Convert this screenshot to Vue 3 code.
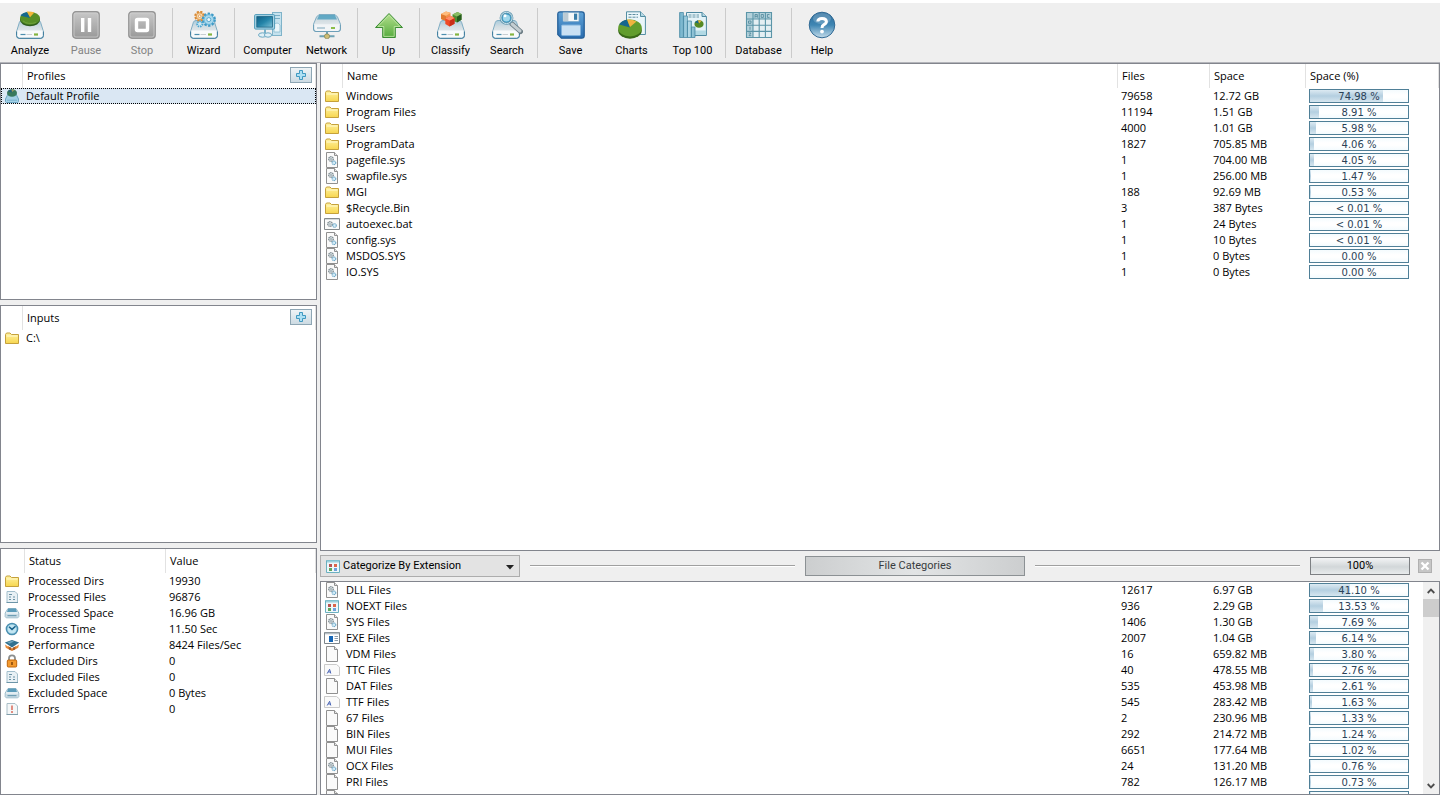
<script setup>
import { ref } from 'vue'

const groups = [
  [
    { label: 'Analyze', icon: 'analyze', size: 'sm' },
    { label: 'Pause', icon: 'pause', size: 'sm', off: true },
    { label: 'Stop', icon: 'stop', size: 'sm', off: true }
  ],
  [{ label: 'Wizard', icon: 'wizard', size: 'md' }],
  [
    { label: 'Computer', icon: 'computer', size: 'lg' },
    { label: 'Network', icon: 'network', size: 'md' }
  ],
  [{ label: 'Up', icon: 'up', size: 'md' }],
  [
    { label: 'Classify', icon: 'classify', size: 'md' },
    { label: 'Search', icon: 'search', size: 'sm' }
  ],
  [
    { label: 'Save', icon: 'save', size: 'lg' },
    { label: 'Charts', icon: 'charts', size: 'lg' },
    { label: 'Top 100', icon: 'top', size: 'lg' }
  ],
  [{ label: 'Database', icon: 'database', size: 'lg' }],
  [{ label: 'Help', icon: 'help', size: 'sm' }]
]

const row = (icon, name, files, space, pct) => ({ icon, name, files, space, pct, fill: parseFloat(pct) || 0 })

const entries = [
  row('folder', 'Windows', '79658', '12.72 GB', '74.98 %'),
  row('folder', 'Program Files', '11194', '1.51 GB', '8.91 %'),
  row('folder', 'Users', '4000', '1.01 GB', '5.98 %'),
  row('folder', 'ProgramData', '1827', '705.85 MB', '4.06 %'),
  row('sys', 'pagefile.sys', '1', '704.00 MB', '4.05 %'),
  row('sys', 'swapfile.sys', '1', '256.00 MB', '1.47 %'),
  row('folder', 'MGI', '188', '92.69 MB', '0.53 %'),
  row('folder', '$Recycle.Bin', '3', '387 Bytes', '< 0.01 %'),
  row('bat', 'autoexec.bat', '1', '24 Bytes', '< 0.01 %'),
  row('sys', 'config.sys', '1', '10 Bytes', '< 0.01 %'),
  row('sys', 'MSDOS.SYS', '1', '0 Bytes', '0.00 %'),
  row('sys', 'IO.SYS', '1', '0 Bytes', '0.00 %')
]

const categories = [
  row('sys', 'DLL Files', '12617', '6.97 GB', '41.10 %'),
  row('cat', 'NOEXT Files', '936', '2.29 GB', '13.53 %'),
  row('sys', 'SYS Files', '1406', '1.30 GB', '7.69 %'),
  row('exe', 'EXE Files', '2007', '1.04 GB', '6.14 %'),
  row('page', 'VDM Files', '16', '659.82 MB', '3.80 %'),
  row('font', 'TTC Files', '40', '478.55 MB', '2.76 %'),
  row('page', 'DAT Files', '535', '453.98 MB', '2.61 %'),
  row('font', 'TTF Files', '545', '283.42 MB', '1.63 %'),
  row('page', '67 Files', '2', '230.96 MB', '1.33 %'),
  row('page', 'BIN Files', '292', '214.72 MB', '1.24 %'),
  row('page', 'MUI Files', '6651', '177.64 MB', '1.02 %'),
  row('sys', 'OCX Files', '24', '131.20 MB', '0.76 %'),
  row('page', 'PRI Files', '782', '126.17 MB', '0.73 %'),
  row('page', '73 Files', '2', '122.88 MB', '0.71 %')
]

const status = [
  ['folder', 'Processed Dirs', '19930'],
  ['doc', 'Processed Files', '96876'],
  ['disk', 'Processed Space', '16.96 GB'],
  ['clock', 'Process Time', '11.50 Sec'],
  ['perf', 'Performance', '8424 Files/Sec'],
  ['lock', 'Excluded Dirs', '0'],
  ['doc', 'Excluded Files', '0'],
  ['disk', 'Excluded Space', '0 Bytes'],
  ['err', 'Errors', '0']
]

const mode = ref('Categorize By Extension')
</script>

<template>
  <div class="app">
    <svg class="defs" aria-hidden="true">
      <defs>
        <linearGradient id="gDrive" x1="0" y1="0" x2="0" y2="1"><stop offset="0" stop-color="#a9cbdc" /><stop offset=".35" stop-color="#d3dde2" /><stop offset="1" stop-color="#f6f8f9" /></linearGradient>
        <linearGradient id="gGreen" x1="0" y1="0" x2="0" y2="1"><stop offset="0" stop-color="#b4e08e" /><stop offset="1" stop-color="#55ab3d" /></linearGradient>
        <linearGradient id="gGray" x1="0" y1="0" x2="0" y2="1"><stop offset="0" stop-color="#c8c8c8" /><stop offset="1" stop-color="#999" /></linearGradient>
        <linearGradient id="gBlue" x1="0" y1="0" x2="0" y2="1"><stop offset="0" stop-color="#2c6d9c" /><stop offset=".5" stop-color="#3f86b3" /><stop offset="1" stop-color="#c4dcea" /></linearGradient>
        <linearGradient id="gSave" x1="0" y1="0" x2="0" y2="1"><stop offset="0" stop-color="#5fa3d8" /><stop offset="1" stop-color="#2a6db0" /></linearGradient>
        <linearGradient id="gScreen" x1="0" y1="0" x2="1" y2="1"><stop offset="0" stop-color="#0f5f86" /><stop offset=".5" stop-color="#2585a9" /><stop offset="1" stop-color="#7cc0d6" /></linearGradient>
        <linearGradient id="gFolder" x1="0" y1="0" x2="0" y2="1"><stop offset="0" stop-color="#fff2a0" /><stop offset="1" stop-color="#f7d64f" /></linearGradient>
        <linearGradient id="gBars" x1="0" y1="0" x2="1" y2="0"><stop offset="0" stop-color="#6fb0ca" /><stop offset=".6" stop-color="#b2d9e7" /><stop offset="1" stop-color="#7db6cb" /></linearGradient>
      </defs>

      <symbol id="drive" viewBox="0 0 28 28">
        <path d="M6 9.5H22Q24 9.5 24.6 11.3L27.4 20.5V24.5Q27.4 27.3 24.8 27.3H3.2Q.6 27.3 .6 24.5V20.5L3.4 11.3Q4 9.5 6 9.5Z" fill="url(#gDrive)" stroke="#80adc3" />
        <path d="M1.3 19.6H26.7V24.3Q26.7 26.4 24.6 26.4H3.4Q1.3 26.4 1.3 24.3Z" fill="#f8fafb" />
        <path d="M.6 20.5V24.5Q.6 27.3 3.2 27.3H24.8Q27.4 27.3 27.4 24.5V20.5" fill="none" stroke="#3d7c9d" />
        <path d="M4.5 23.5H9.5" stroke="#4d8fae" stroke-width="1.2" />
        <path d="M10.5 23.5H16" stroke="#c7ced2" />
        <path d="M18 23.5H22" stroke="#84b440" stroke-width="2.2" />
      </symbol>
      <symbol id="analyze" viewBox="0 0 28 28">
        <use href="#drive" />
        <ellipse cx="14" cy="9" rx="10" ry="6.2" fill="#2f5d1c" />
        <ellipse cx="14" cy="7.3" rx="10" ry="6.4" fill="#578f27" />
        <path d="M14 7 4.6 4.8Q6.4 1.6 11.3 1Z" fill="#15688e" />
        <path d="M14 6.2 10.7.6Q15 .2 18.3 1.6Z" fill="#f2b63a" />
        <path d="M7 10Q12 14 20 11.5" stroke="#79aa43" fill="none" opacity=".7" />
      </symbol>
      <symbol id="pause" viewBox="0 0 28 28">
        <rect x=".8" y=".8" width="26.4" height="26.4" rx="3" fill="url(#gGray)" stroke="#969696" stroke-width="1.4" />
        <rect x="2" y="2" width="24" height="24" rx="2" fill="none" stroke="#d2d2d2" opacity=".7" />
        <path d="M9 7h3.4v14H9zM15.8 7h3.4v14h-3.4z" fill="#fff" />
      </symbol>
      <symbol id="stop" viewBox="0 0 28 28">
        <rect x=".8" y=".8" width="26.4" height="26.4" rx="3" fill="url(#gGray)" stroke="#969696" stroke-width="1.4" />
        <rect x="2" y="2" width="24" height="24" rx="2" fill="none" stroke="#d2d2d2" opacity=".7" />
        <rect x="8.5" y="8.5" width="11" height="11" rx="1" fill="none" stroke="#fff" stroke-width="3.4" />
      </symbol>
      <symbol id="wizard" viewBox="0 0 28 28">
        <use href="#drive" />
        <circle cx="9.7" cy="5.2" r="4.3" fill="#f5d1a4" stroke="#d98a36" stroke-width="2.4" stroke-dasharray="2.1 1.27" />
        <circle cx="9.7" cy="5.2" r="3.4" fill="#f6d8ae" stroke="#e09c50" />
        <circle cx="9.7" cy="5.2" r="1.3" fill="#fff" stroke="#dc9345" stroke-width=".8" />
        <circle cx="18.8" cy="8.6" r="5.8" fill="#bfe1f0" stroke="#3f9ac6" stroke-width="2.6" stroke-dasharray="2.3 1.34" />
        <circle cx="18.8" cy="8.6" r="4.9" fill="#a9d8ec" stroke="#62b2d7" />
        <circle cx="18.8" cy="8.6" r="2" fill="#eef8fc" stroke="#3f9ac6" stroke-width=".8" />
        <circle cx="9.8" cy="13" r="2.6" fill="#cbe8f4" stroke="#4ba5cf" stroke-width="1.9" stroke-dasharray="1.4 .9" />
      </symbol>
      <symbol id="computer" viewBox="0 0 28 28">
        <rect x="18.5" y="1.5" width="9" height="23" fill="#c5e2ee" stroke="#7fb3c9" />
        <path d="M20 4.5H26M20 7.5H26" stroke="#78aec5" />
        <path d="M20 14q3-4 6 0v7h-6z" fill="#eaf5f9" stroke="#8abdd1" stroke-width=".8" />
        <rect x=".6" y="3.6" width="20" height="14.5" rx="1" fill="#a8d4e5" stroke="#4e9ab9" />
        <rect x="2.8" y="5.6" width="15.6" height="10.5" fill="url(#gScreen)" stroke="#1b6484" stroke-width=".8" />
        <path d="M10 18h2v5h-2z" fill="#78b2ca" />
        <ellipse cx="8.5" cy="24" rx="4" ry="2.2" fill="#e1f0f6" stroke="#6ba8c2" />
        <ellipse cx="14" cy="24" rx="3.6" ry="2.2" fill="#e1f0f6" stroke="#6ba8c2" />
      </symbol>
      <symbol id="network" viewBox="0 0 28 28">
        <path d="M6 3.5H22L24.5 6 27.4 13V18Q27.4 20.5 25 20.5H3Q.6 20.5 .6 18V13L3.5 6Z" fill="url(#gDrive)" stroke="#80adc3" />
        <path d="M6.2 4H21.8L24 8.5H4Z" fill="#4b9dbd" opacity=".8" />
        <path d="M1.3 13.3H26.7V18Q26.7 19.8 25 19.8H3Q1.3 19.8 1.3 18Z" fill="#f2f5f7" />
        <path d="M.6 14V18Q.6 20.5 3 20.5H25Q27.4 20.5 27.4 18V14" fill="none" stroke="#6d9fb8" />
        <path d="M4 17H12" stroke="#7fa7bb" /><path d="M18 17h4" stroke="#8bbd49" stroke-width="2" />
        <path d="M14 21V25M6.5 25.3H21.5" stroke="#6fa3b5" stroke-width="2" />
        <rect x="11.5" y="23" width="5" height="4.6" rx="2" fill="#cfbd74" stroke="#8c8a55" stroke-width=".8" />
      </symbol>
      <symbol id="up" viewBox="0 0 28 28">
        <path d="M14 2.5 27.5 16.5H20.3V26.5H7.7V16.5H.5Z" fill="url(#gGreen)" stroke="#3a8c33" stroke-linejoin="round" />
        <path d="M14 4.2 25 15.5H19.2V25.4H8.8V15.5H3Z" fill="none" stroke="#c9ebae" opacity=".75" />
      </symbol>
      <symbol id="classify" viewBox="0 0 28 28">
        <use href="#drive" />
        <path d="M4 3 9 .4 13.5 1.8V7.5L9 10 4 8Z" fill="#f2914a" /><path d="M4 3 9 4.8V10L4 8Z" fill="#e07a30" /><path d="M4 3 9 .4 13.5 2 9 4.8Z" fill="#ffbb7b" />
        <path d="M15.5 3.4 20.5 1 24.5 3V8.8L20 11.4 15.5 9.4Z" fill="#4d8e32" /><path d="M20 5.5 24.5 3V8.8L20 11.4Z" fill="#275c1d" /><path d="M15.5 3.4 20.5 1 24.5 3 20 5.5Z" fill="#8bbd63" />
        <path d="M8.3 7.4 13.6 4.8 17.5 7V12.8L12.5 15.4 8.3 13Z" fill="#f04a25" /><path d="M12.8 9.4 17.5 7V12.8L12.5 15.4Z" fill="#c92e17" /><path d="M8.3 7.4 13.6 4.8 17.5 7 12.8 9.4Z" fill="#ff8e66" />
      </symbol>
      <symbol id="search" viewBox="0 0 31 28">
        <use href="#drive" width="28" height="28" />
        <path d="M20 13 28.5 20.5" stroke="#6d7d85" stroke-width="5" stroke-linecap="round" />
        <path d="M20 13 28 20" stroke="#c4ced2" stroke-width="3" stroke-linecap="round" />
        <circle cx="14.5" cy="6.9" r="5.7" fill="#3d9bc6" stroke="#6296ae" stroke-width="2.4" />
        <circle cx="14.5" cy="6.9" r="5.7" fill="none" stroke="#cae5ef" />
        <circle cx="14.5" cy="7" r="3.6" fill="#a0d7eb" /><circle cx="13" cy="4.8" r="1.5" fill="#fff" />
      </symbol>
      <symbol id="save" viewBox="0 0 28 28">
        <path d="M3.2.8H24.8Q27.2.8 27.2 3.2V24.8Q27.2 27.2 24.8 27.2H4.4L.8 23.6V3.2Q.8.8 3.2.8Z" fill="url(#gSave)" stroke="#245f98" stroke-width="1.3" />
        <path d="M6 1.4H22V9.5Q22 10.6 21 10.6H7Q6 10.6 6 9.5Z" fill="#f5f8f9" stroke="#78a7c7" stroke-width=".8" />
        <rect x="6.4" y="1.8" width="5" height="8.4" fill="#bccbd4" /><rect x="17" y="2.6" width="3.2" height="6.2" fill="#3a7ea9" />
        <rect x="4.5" y="14" width="19" height="10.5" rx="1" fill="#c9e0f3" stroke="#7fb0db" />
      </symbol>
      <symbol id="charts" viewBox="0 0 28 28">
        <path d="M8.5.8H22.5L27.4 5.5V23.5H8.5Z" fill="#eaf6fa" stroke="#538ea3" /><path d="M22.5.8V5.5H27.4" fill="#b5d8e4" stroke="#538ea3" />
        <path d="M10.5 3.5H20M10.5 6.2H20" stroke="#5c8da0" stroke-dasharray="3 1" />
        <ellipse cx="12" cy="19.5" rx="11.8" ry="8.3" fill="#3a6a18" /><ellipse cx="12" cy="17" rx="11.8" ry="8.4" fill="#629d2d" />
        <path d="M12 16.5 1.2 13.5Q3.5 9.6 9 8.8Z" fill="#15668f" /><path d="M12 16 9 8.6Q14 8 18.5 10.4Z" fill="#efb440" />
      </symbol>
      <symbol id="top" viewBox="0 0 28 28">
        <path d="M7.5 1.5H23L27.4 5.5V24.5H7.5Z" fill="#e4f3f8" stroke="#4d88a0" /><path d="M23 1.5V5.5H27.4" fill="#b5d8e4" stroke="#4d88a0" />
        <path d="M9.5 4H20M9.5 6H20" stroke="#6796a8" stroke-dasharray="3 1" />
        <path d="M8 19.5H27V24H8Z" fill="#b2d9e4" />
        <ellipse cx="20" cy="13" rx="4.6" ry="3.8" fill="#568a25" /><path d="M20 12.6 15.6 11.2 19 9.2Z" fill="#15668f" /><path d="M20 12.6 19 9.2 22.6 9.8Z" fill="#e9b23d" />
        <path d="M.6 1.5H4.4V26.5H.6ZM4.4 5H8.4V26.5H4.4ZM8.4 10H12.4V26.5H8.4ZM12.4 16H16V26.5H12.4Z" fill="url(#gBars)" stroke="#4b8ba6" stroke-width=".8" />
      </symbol>
      <symbol id="database" viewBox="0 0 28 28">
        <path d="M1 2H27V27H1Z" fill="#e4eff3" /><path d="M1 2H27V8H1ZM1 8H8V27H1Z" fill="#b4d2dc" />
        <path d="M1.5 1.5H26.5V26.5H1.5ZM1.5 8H26.5M1.5 14.2H26.5M1.5 20.4H26.5M8 1.5V26.5M14.2 1.5V26.5M20.4 1.5V26.5" fill="none" stroke="#5b95a8" stroke-width="1.1" />
        <path d="M10 6.8V3.5H12.3V6.8M10 5.3H12.3M16.2 3.5H18.4V6.4H16.2ZM24.5 3.5H22.4V6.4H24.5M3.5 10H6V12.3H3.5ZM5 15.7V18.8M3.5 22H6L4 24.7H6.3" fill="none" stroke="#4d8598" stroke-width=".8" />
      </symbol>
      <symbol id="help" viewBox="0 0 28 28">
        <circle cx="14" cy="14" r="12.8" fill="url(#gBlue)" stroke="#336b95" />
        <ellipse cx="14" cy="7.5" rx="9" ry="5.5" fill="#fff" opacity=".2" />
        <path d="M9.8 10.5Q10 7.4 14 7.4 18.4 7.4 18.4 10.6 18.4 12.5 16 13.7 14 14.7 14 17" fill="none" stroke="#fff" stroke-width="3" /><circle cx="14" cy="20.6" r="1.9" fill="#fff" />
      </symbol>

      <symbol id="folder" viewBox="0 0 16 16">
        <path d="M1.5 13.5V4.5L2.5 3H6L7.5 4.5H14.5V13.5Z" fill="url(#gFolder)" stroke="#c5a13c" /><path d="M2.5 6H13.5" stroke="#fff9cf" />
      </symbol>
      <symbol id="page" viewBox="0 0 16 16">
        <path d="M2.5.5H10.5L13.5 3.5V15.5H2.5Z" fill="#fafafa" stroke="#909090" /><path d="M10.5.5V3.5H13.5" fill="#e8e8e8" stroke="#909090" />
      </symbol>
      <symbol id="sys" viewBox="0 0 16 16">
        <use href="#page" />
        <circle cx="7" cy="7" r="2.3" fill="#dce4e8" stroke="#7e8b91" stroke-width="1.3" stroke-dasharray="1.3 .5" /><circle cx="7" cy="7" r=".8" fill="#7e8b91" />
        <circle cx="10" cy="10.8" r="1.8" fill="#d8eef8" stroke="#6fa9c9" stroke-width="1.2" stroke-dasharray="1.1 .4" />
      </symbol>
      <symbol id="bat" viewBox="0 0 16 16">
        <path d="M.5 2.5H15.5V13.5H.5Z" fill="#fafafa" stroke="#858a8d" /><path d="M1 3.5H15" stroke="#d4dadd" />
        <circle cx="6" cy="8" r="2.3" fill="#dce4e8" stroke="#7e8b91" stroke-width="1.3" stroke-dasharray="1.3 .5" /><circle cx="6" cy="8" r=".7" fill="#7e8b91" />
        <circle cx="10.5" cy="9.5" r="1.8" fill="#d8eef8" stroke="#6fa9c9" stroke-width="1.2" stroke-dasharray="1.1 .4" />
      </symbol>
      <symbol id="cat" viewBox="0 0 16 16">
        <path d="M1.5 2.5H14.5V14.5H1.5Z" fill="#eef8fa" stroke="#6bb0c0" /><path d="M2 3.5H14" stroke="#9bd0dd" stroke-width="2" />
        <path d="M4 6h3v3H4z" fill="#b85454" /><path d="M9 6h3v3H9z" fill="#db674c" /><path d="M4 10h3v3H4z" fill="#5fa65a" /><path d="M9 10h3v3H9z" fill="#6fa0dc" />
      </symbol>
      <symbol id="exe" viewBox="0 0 16 16">
        <path d="M.5 2.5H15.5V13.5H.5Z" fill="#fff" stroke="#7d858b" /><path d="M1 3.5H15" stroke="#b6bfc5" stroke-width="1.6" />
        <path d="M5 6h4v6H5z" fill="#1565b5" /><path d="M10.5 6.5H14M10.5 8.5H14M10.5 10.5H14" stroke="#8d9dab" />
      </symbol>
      <symbol id="font" viewBox="0 0 16 16">
        <path d="M.5 2.5H12.5L15.5 5V13.5H.5Z" fill="#fafafa" stroke="#cacaca" />
        <path d="M3.2 11.5 5.6 7.3 6.8 11.5M4.3 10H6.5" fill="none" stroke="#4763b6" />
      </symbol>
      <symbol id="doc" viewBox="0 0 16 16">
        <path d="M3 2.5H11L13.5 5V13.5H3Z" fill="#e9f1f5" stroke="#a3bfcc" /><path d="M2.5 13.5H14" stroke="#6c95a8" />
        <path d="M5 5.5H8M5 8H7M9 8H11M5 10.5H7M9 10.5H11" stroke="#6a90a3" />
      </symbol>
      <symbol id="disk" viewBox="0 0 16 16">
        <path d="M4 3.5H12L14.8 8V11.8L13.8 12.8H2.2L1.2 11.8V8Z" fill="#e2edf2" stroke="#9cbccb" /><path d="M4.2 3.6H11.8L13 7H3Z" fill="#5c9cba" />
        <path d="M2 9H14V12H2Z" fill="#cbdce5" /><path d="M3.5 10.7H12.5" stroke="#5a90a9" />
      </symbol>
      <symbol id="clock" viewBox="0 0 16 16">
        <circle cx="8" cy="8" r="5.6" fill="#a9d9eb" stroke="#4a8fb0" stroke-width="1.5" /><circle cx="8" cy="8" r="4" fill="#c4e6f2" />
        <path d="M5 5.8 8 8.4 11.5 5.2" fill="none" stroke="#19618b" stroke-width="1.5" />
      </symbol>
      <symbol id="perf" viewBox="0 0 16 16">
        <path d="M1 7.4 4 9.4V12L1.8 10.8ZM15 7.4 12 9.4V12L14.2 10.8Z" fill="#e58a3a" /><path d="M4 9 8 11.4 12 9V12L8 14 4 12Z" fill="#d9792a" />
        <path d="M.8 5.4 8 3 15.2 5.4 8 10.6Z" fill="#31718f" /><path d="M3.2 5.3 8 3.8 10 4.5 5.4 6.8Z" fill="#6ba3bb" /><path d="M6 10V13M10 10V13" stroke="#6f4324" />
      </symbol>
      <symbol id="lock" viewBox="0 0 16 16">
        <path d="M5 8V5.2Q5 2.3 8 2.3T11 5.2V8" fill="none" stroke="#8b8e8e" stroke-width="1.8" />
        <rect x="3.3" y="7" width="9.4" height="7" rx="1" fill="#f39a2f" stroke="#c0660c" /><path d="M8 9V12" stroke="#87480b" stroke-width="1.6" />
      </symbol>
      <symbol id="err" viewBox="0 0 16 16">
        <path d="M3 2.5H11L13.5 5V13.5H3Z" fill="#f4f7f8" stroke="#a9bec7" /><path d="M2.5 13.5H14" stroke="#7f9daa" />
        <path d="M8 4.5V9M8 10V12" stroke="#d9604f" stroke-width="1.4" />
      </symbol>
      <symbol id="profile" viewBox="0 0 16 16">
        <path d="M4 6H12L14.5 11V13.5L13.7 14.5H2.3L1.5 13.5V11Z" fill="#a2cfe4" stroke="#6da6c3" /><path d="M3 12.2H13" stroke="#78b3d0" />
        <ellipse cx="8" cy="5" rx="5" ry="3.8" fill="#39795c" /><path d="M8 4.4 3.6 3.3 7.5 1.2Z" fill="#205f82" /><path d="M8 4 7.5 1.2 10.8 2Z" fill="#a09a61" />
      </symbol>
      <symbol id="plus" viewBox="0 0 10 10">
        <path d="M3.5.5H6.5V3.5H9.5V6.5H6.5V9.5H3.5V6.5H.5V3.5H3.5Z" fill="#aee0f4" stroke="#3f99c1" stroke-linejoin="round" />
      </symbol>
    </svg>

    <header class="toolbar">
      <div v-for="(group, i) in groups" :key="i" class="group">
        <button v-for="tool in group" :key="tool.label" type="button" class="tool" :class="tool.size" :disabled="tool.off">
          <svg class="big" :class="{ wide: tool.icon === 'search' }"><use :href="'#' + tool.icon" /></svg>
          <span>{{ tool.label }}</span>
        </button>
      </div>
    </header>

    <main class="body">
      <aside class="side">
        <section class="panel">
          <table>
            <colgroup><col class="c-ico"><col></colgroup>
            <thead><tr><th></th><th><div class="head">Profiles<button type="button" class="add" aria-label="Add profile"><svg class="plus"><use href="#plus" /></svg></button></div></th></tr></thead>
            <tbody><tr class="selected"><td><svg class="small"><use href="#profile" /></svg></td><td>Default Profile</td></tr></tbody>
          </table>
        </section>
        <section class="panel">
          <table>
            <colgroup><col class="c-ico"><col></colgroup>
            <thead><tr><th></th><th><div class="head">Inputs<button type="button" class="add" aria-label="Add input"><svg class="plus"><use href="#plus" /></svg></button></div></th></tr></thead>
            <tbody><tr><td><svg class="small"><use href="#folder" /></svg></td><td>C:\</td></tr></tbody>
          </table>
        </section>
        <section class="panel">
          <table>
            <colgroup><col class="c-stat"><col class="c-label"><col></colgroup>
            <thead><tr><th></th><th>Status</th><th>Value</th></tr></thead>
            <tbody>
              <tr v-for="s in status" :key="s[1]"><td><svg class="small"><use :href="'#' + s[0]" /></svg></td><td>{{ s[1] }}</td><td>{{ s[2] }}</td></tr>
            </tbody>
          </table>
        </section>
      </aside>

      <div class="content">
        <section class="panel">
          <table>
            <colgroup><col class="c-ico"><col><col class="c-files"><col class="c-space"><col class="c-pct"></colgroup>
            <thead><tr><th></th><th>Name</th><th>Files</th><th>Space</th><th>Space (%)</th></tr></thead>
            <tbody>
              <tr v-for="e in entries" :key="e.name">
                <td><svg class="small"><use :href="'#' + e.icon" /></svg></td><td>{{ e.name }}</td><td>{{ e.files }}</td><td>{{ e.space }}</td>
                <td><div class="bar"><i :style="{ width: e.fill + '%' }"></i><span>{{ e.pct }}</span></div></td>
              </tr>
            </tbody>
          </table>
        </section>

        <div class="catbar">
          <div class="picker">
            <svg class="small"><use href="#cat" /></svg>
            <select v-model="mode" aria-label="Categorization"><option>Categorize By Extension</option></select>
            <svg class="arrow" viewBox="0 0 8 5"><path d="M0 0H8L4 4.5Z" fill="#222" /></svg>
          </div>
          <hr>
          <button type="button" class="title">File Categories</button>
          <hr>
          <button type="button" class="total">100%</button>
          <button type="button" class="close" aria-label="Close"><svg viewBox="0 0 12 12"><path d="M2.5 2.5 9.5 9.5M9.5 2.5 2.5 9.5" stroke="#fff" stroke-width="2.4" /></svg></button>
        </div>

        <section class="panel split">
          <div class="view">
            <table>
              <colgroup><col class="c-ico"><col><col class="c-files"><col class="c-space"><col class="c-pct-s"></colgroup>
              <tbody>
                <tr v-for="e in categories" :key="e.name">
                  <td><svg class="small"><use :href="'#' + e.icon" /></svg></td><td>{{ e.name }}</td><td>{{ e.files }}</td><td>{{ e.space }}</td>
                  <td><div class="bar"><i :style="{ width: e.fill + '%' }"></i><span>{{ e.pct }}</span></div></td>
                </tr>
              </tbody>
            </table>
          </div>
          <div class="scroll">
            <button type="button" aria-label="Scroll up"><svg viewBox="0 0 8 6"><path d="M.7 5 4 1.6 7.3 5" /></svg></button>
            <div class="thumb"></div>
            <button type="button" class="down" aria-label="Scroll down"><svg viewBox="0 0 8 6"><path d="M.7 1 4 4.4 7.3 1" /></svg></button>
          </div>
        </section>
      </div>
    </main>
  </div>
</template>

<style>
body { margin: 0; background: #efefef; }
</style>

<style scoped>
.app { height: 100vh; display: flex; flex-direction: column; background: #efefef; color: #000; font: 11px/16px "Open Sans", "Noto Sans", sans-serif; }
.app * { box-sizing: border-box; }
.defs { position: absolute; width: 0; height: 0; }
button, select { font: inherit; color: inherit; margin: 0; padding: 0; border: 0; background: none; }

.toolbar { display: flex; flex: none; padding: 5px 0 4px 2px; border-top: 3px solid #fff; border-bottom: 1px solid #b4b5ba; font-family: Roboto, "Open Sans", sans-serif; }
.group { display: flex; padding-right: 2px; margin-right: 2px; border-right: 1px solid #cbcbcb; height: 50px; }
.group:last-child { border-right: 0; }
.tool { display: flex; flex-direction: column; align-items: center; white-space: nowrap; padding-top: 3px; gap: 4px; }
.tool:disabled { color: #838383; }
.sm { width: 56px; }
.md { width: 57px; }
.lg { width: 61px; }
.big { width: 28px; height: 28px; flex: none; }
.wide { width: 31px; }

.body { flex: 1; min-height: 0; display: grid; grid-template-columns: 317px minmax(0, 1fr); column-gap: 3px; }
.side { display: grid; grid-template-rows: minmax(0, 237fr) minmax(0, 238fr) minmax(0, 247fr); row-gap: 5px; min-height: 0; }
.content { display: grid; grid-template-rows: minmax(0, 488fr) 30px minmax(0, 214fr); min-height: 0; }
.panel { background: #fff; border: 1px solid #82858d; overflow: hidden; }

table { width: 100%; table-layout: fixed; border-collapse: separate; border-spacing: 0; }
.c-ico { width: 22px; }
.c-stat { width: 24px; }
.c-label { width: 141px; }
.c-files { width: 92px; }
.c-space { width: 96px; }
.c-pct { width: 133px; }
.c-pct-s { width: 117px; }
th { height: 24px; padding: 0 0 0 4px; text-align: left; font-weight: 400; border-right: 1px solid #e2e2e2; }
td { height: 16px; padding: 0 0 0 3px; white-space: nowrap; line-height: 16px; }
.head { display: flex; align-items: center; justify-content: space-between; padding-right: 3px; }
.add { width: 22px; height: 16px; border: 1px solid #8ea6b4; background: linear-gradient(#eef3f6, #cddbe3); display: flex; align-items: center; justify-content: center; margin-bottom: 2px; }
.plus { width: 10px; height: 10px; }
.small { display: block; width: 16px; height: 16px; flex: none; }
.selected { background: #dae7f3; outline: 1px dotted #000; outline-offset: -1px; }

.bar { display: grid; width: 100px; height: 14px; border: 1px solid #4f7f97; background: linear-gradient(#f4fbfe, #fff 40%, #fff 60%, #f4fbfe); }
.bar > * { grid-area: 1 / 1; }
.bar i { height: 12px; background: linear-gradient(#dceaf2, #b4cfe0 50%, #d6e6ef); }
.bar span { text-align: center; font: 10px/14px "DejaVu Sans", sans-serif; color: #2b4257; }

.catbar { display: flex; align-items: center; gap: 10px; padding-right: 8px; font-family: Roboto, "Open Sans", sans-serif; }
.picker { display: flex; align-items: center; width: 200px; height: 22px; padding: 0 5px 0 4px; border: 1px solid #adadad; background: #e3e3e3; }
.picker select { flex: 1; min-width: 0; appearance: none; padding-left: 2px; outline: 0; }
.arrow { width: 8px; height: 5px; margin-top: 3px; }
hr { flex: 1; height: 2px; margin: 0; border: 0; border-top: 1px solid #a0a0a0; background: #fff; }
.title { width: 220px; height: 20px; border: 1px solid #8c9194; background: linear-gradient(90deg, #cccecf, #e2e4e5 50%, #cccecf); color: #383c40; }
.total { width: 100px; height: 18px; border: 1px solid #7d8083; background: linear-gradient(#f3f4f5, #d2d7d9 55%, #e8ebec); line-height: 16px; }
.close { width: 14px; height: 14px; margin-left: -2px; border: 1px solid #b0b0b0; background: #c6c6c6; }
.close svg { display: block; width: 12px; height: 12px; }

.split { display: flex; }
.view { flex: 1; min-width: 0; overflow: hidden; }
.scroll { width: 16px; display: flex; flex-direction: column; background: #f0f0f0; }
.scroll button { height: 17px; display: flex; align-items: center; justify-content: center; flex: none; }
.scroll svg { width: 8px; height: 6px; fill: none; stroke: #4d4d4d; stroke-width: 1.8; }
.thumb { height: 18px; background: #cdcdcd; flex: none; }
.down { margin-top: auto; }
</style>
